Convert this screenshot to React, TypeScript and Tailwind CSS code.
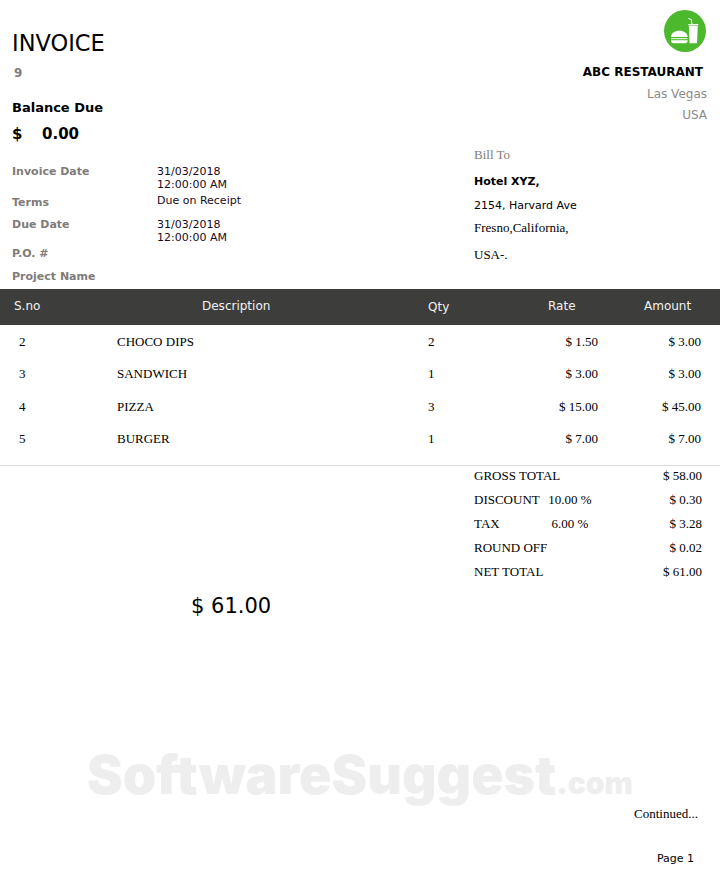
const sans = "font-['DejaVu_Sans',sans-serif]";
const serif = "font-['Liberation_Serif',serif]";

const items = [
  { sno: '2', name: 'CHOCO DIPS', qty: '2', rate: '$ 1.50', amount: '$ 3.00' },
  { sno: '3', name: 'SANDWICH', qty: '1', rate: '$ 3.00', amount: '$ 3.00' },
  { sno: '4', name: 'PIZZA', qty: '3', rate: '$ 15.00', amount: '$ 45.00' },
  { sno: '5', name: 'BURGER', qty: '1', rate: '$ 7.00', amount: '$ 7.00' },
];

const totals = [
  { label: 'GROSS TOTAL', pct: '', value: '$ 58.00' },
  { label: 'DISCOUNT', pct: '10.00 %', value: '$ 0.30' },
  { label: 'TAX', pct: '6.00 %', value: '$ 3.28' },
  { label: 'ROUND OFF', pct: '', value: '$ 0.02' },
  { label: 'NET TOTAL', pct: '', value: '$ 61.00' },
];

function Logo() {
  return (
    <svg width="42" height="42" viewBox="0 0 42 42" className="mr-[14px]">
      <circle cx="21" cy="21" r="21" fill="#4cb82b" />
      {/* burger */}
      <path d="M7 27c0-3.800 3.600-6.200 8.300-6.200s8.300 2.400 8.300 6.200z" fill="#fff" />
      <rect x="7" y="28" width="16.600" height="1.300" rx=".6" fill="#fff" opacity=".8" />
      <path d="M7 30.200h16.600v.8c0 1.300-1 2.200-2.300 2.200h-12c-1.300 0-2.300-.9-2.300-2.200z" fill="#fff" />
      {/* cup and straw */}
      <path d="M24.800 15.800h9l-.8 17.400h-7.400z" fill="#fff" />
      <rect x="24.300" y="14" width="10" height="1.300" fill="#fff" />
      <path d="M28 14l-.7-4.500-3-1" fill="none" stroke="#fff" strokeWidth="1" />
    </svg>
  );
}

function MetaRow({ label, value, className }: { label: string; value?: React.ReactNode; className: string }) {
  return (
    <div className={`flex ${className}`}>
      <div className={`w-[145px] font-bold text-[#7f7b7b] ${sans} text-[11px] leading-[13px]`}>{label}</div>
      <div className={`text-[#1a0a1a] ${sans} text-[11px] leading-[13px]`}>{value}</div>
    </div>
  );
}

export default function App() {
  return (
    <div className="relative w-[720px] h-[874px] bg-white overflow-hidden text-black">
      {/* top part */}
      <div className="flex justify-between h-[289px]">
        <div className="pl-3 pt-[30px]">
          <h1 className={`${sans} text-[22.500px] leading-[26px] text-black`}>INVOICE</h1>
          <div className={`${sans} font-bold text-[12px] leading-[14px] text-[#7f7b7b] mt-[10px] pl-[2px]`}>9</div>
          <div className={`${sans} font-bold text-[13px] leading-[16px] mt-[20px]`}>Balance Due</div>
          <div className={`flex font-bold text-[15px] leading-[20px] mt-[8px] ${sans}`}>
            <span className="w-[30px]">$</span>
            <span>0.00</span>
          </div>
          <div className="mt-[21px]">
            <MetaRow label="Invoice Date" value={<>31/03/2018<br />12:00:00 AM</>} className="h-[31px]" />
            <MetaRow label="Terms" value={<span className="block -mt-[2px]">Due on Receipt</span>} className="h-[22px]" />
            <MetaRow label="Due Date" value={<>31/03/2018<br />12:00:00 AM</>} className="h-[29px]" />
            <MetaRow label="P.O. #" className="h-[23px]" />
            <MetaRow label="Project Name" className="h-[13px]" />
          </div>
        </div>
        <div className="w-[246px] flex flex-col">
          <div className="flex justify-end pt-[10px]">
            <Logo />
          </div>
          <div className={`${sans} text-right pr-[17px] font-bold text-[12px] leading-[14px] mt-[13px]`}>ABC RESTAURANT</div>
          <div className={`${sans} text-right pr-[13px] text-[12px] leading-[14px] text-[#8a8a8a] mt-[8px]`}>Las Vegas</div>
          <div className={`${sans} text-right pr-[13px] text-[12px] leading-[14px] text-[#8a8a8a] mt-[7px]`}>USA</div>
          <div className={`${serif} text-[13px] leading-[15px] text-[#7f7b7b] mt-[25px]`}>Bill To</div>
          <div className={`${sans} font-bold text-[11px] leading-[14px] mt-[13px]`}>Hotel XYZ,</div>
          <div className={`${sans} text-[11px] leading-[14px] mt-[10px]`}>2154, Harvard Ave</div>
          <div className={`${serif} text-[13px] leading-[16px] mt-[7px]`}>Fresno,California,</div>
          <div className={`${serif} text-[13px] leading-[16px] mt-[11px]`}>USA-.</div>
        </div>
      </div>

      {/* table head */}
      <div className={`grid grid-cols-[117px_311px_80px_106px_106px] h-[36px] items-center bg-[#3d3d3b] text-[#f2f2f2] ${sans} text-[12px]`}>
        <div className="pl-[14px] -mt-[2px]">S.no</div>
        <div className="-mt-[2px] pl-[85px]">Description</div>
        <div>Qty</div>
        <div className="-mt-[2px] pl-[40px]">Rate</div>
        <div className="-mt-[2px] pl-[30px]">Amount</div>
      </div>

      {/* table rows */}
      <div className={`${serif} text-[13px] leading-[16px] pt-[1px] h-[141px] border-b border-[#dedede]`}>
        {items.map((it) => (
          <div key={it.sno} className="grid grid-cols-[117px_311px_80px_90px_103px] h-[32.300px] items-center">
            <div className="pl-[19px]">{it.sno}</div>
            <div>{it.name}</div>
            <div>{it.qty}</div>
            <div className="text-right">{it.rate}</div>
            <div className="text-right">{it.amount}</div>
          </div>
        ))}
      </div>

      {/* totals */}
      <div className={`${serif} text-[13px] leading-[16px] pl-[474px] -mt-[2px]`}>
        {totals.map((t) => (
          <div key={t.label} className="grid grid-cols-[74px_44px_110px] h-[24px] items-center w-[228px]">
            <div className="whitespace-nowrap">{t.label}</div>
            <div className="text-center whitespace-nowrap">{t.pct}</div>
            <div className="text-right">{t.value}</div>
          </div>
        ))}
      </div>

      <div className={`${sans} text-[21px] leading-[26px] pl-[191px] mt-[9px]`}>$ 61.00</div>

      {/* watermark */}
      <div className="absolute left-[87px] top-[745px] flex items-baseline font-['Inter',sans-serif] font-black text-[#eeeeee] whitespace-nowrap">
        <span className="text-[53.500px] leading-[60px]">SoftwareSuggest</span>
        <span className="text-[30px] leading-[60px]">.com</span>
      </div>

      <div className={`${serif} absolute right-[22px] top-[806px] text-[13px] leading-[16px]`}>Continued...</div>
      <div className={`${sans} absolute right-[26px] top-[852px] text-[11px] leading-[14px]`}>Page 1</div>
    </div>
  );
}
